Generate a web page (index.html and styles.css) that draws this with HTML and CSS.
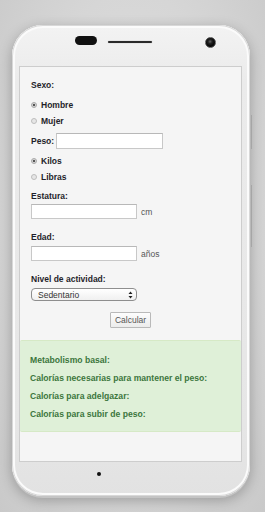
FILE: index.html
```html
<!DOCTYPE html>
<html lang="es">
<head>
    <meta charset="UTF-8">
    <meta name="viewport" content="width=device-width, initial-scale=1.0">
    <title>Calculadora de calorías</title>
    <link rel="stylesheet" href="styles.css">
</head>
<body>
    <div class="phone">
        <span class="side-button side-top"></span>
        <span class="side-button side-bottom"></span>

        <div class="bezel-top">
            <span class="earpiece"></span>
            <span class="speaker"></span>
            <span class="camera"></span>
        </div>

        <div class="screen">
            <form class="form">
                <div class="label">Sexo:</div>
                <label class="radio-row gap-10"><input type="radio" name="sexo" checked> Hombre</label>
                <label class="radio-row gap-6"><input type="radio" name="sexo"> Mujer</label>

                <div class="peso-row">
                    <span class="label">Peso:</span>
                    <input type="text" class="field field-peso">
                </div>

                <label class="radio-row gap-7"><input type="radio" name="unidad" checked> Kilos</label>
                <label class="radio-row gap-6"><input type="radio" name="unidad"> Libras</label>

                <div class="label gap-9">Estatura:</div>
                <div class="field-row gap-3">
                    <input type="text" class="field">
                    <span class="unit">cm</span>
                </div>

                <div class="label gap-13">Edad:</div>
                <div class="field-row gap-4">
                    <input type="text" class="field">
                    <span class="unit">años</span>
                </div>

                <div class="label gap-13">Nivel de actividad:</div>
                <div class="select gap-4">
                    <span>Sedentario</span>
                    <svg width="5" height="8" viewBox="0 0 5 8">
                        <path d="M0.5 3 L2.5 0.5 L4.5 3 Z M0.5 5 L2.5 7.5 L4.5 5 Z" fill="#222"/>
                    </svg>
                </div>

                <button type="button" class="calc">Calcular</button>
            </form>

            <div class="results">
                <p>Metabolismo basal:</p>
                <p>Calorías necesarias para mantener el peso:</p>
                <p>Calorías para adelgazar:</p>
                <p>Calorías para subir de peso:</p>
            </div>
        </div>

        <div class="bezel-bottom">
            <span class="home"></span>
        </div>
    </div>
</body>
</html>
```

FILE: styles.css
```css
body {
    margin: 0;
    width: 265px;
    height: 512px;
    overflow: hidden;
    font-family: "Liberation Sans", Arial, sans-serif;
    background: radial-gradient(ellipse at 50% 45%, #e2e2e2 0%, #d6d6d6 60%, #c9c9c9 100%);
}
.phone {
    position: relative;
    margin: 25px 0 0 12px;
    width: 238px;
    height: 471px;
    box-sizing: border-box;
    display: flex;
    flex-direction: column;
    border-radius: 31px;
    background: linear-gradient(#f3f3f3, #ebebeb 12%, #e6e6e6 85%, #e2e2e2);
    box-shadow: inset 0 0 0 1px #d8d8d8, inset 0 0 0 3px #fbfbfb, 0 2px 0 #c4c4c4, 0 4px 14px rgba(0, 0, 0, 0.28);
}
.side-button {
    position: absolute;
    right: -2px;
    width: 1px;
    background: #a6a6a6;
}
.side-top {
    top: 90px;
    height: 34px;
}
.side-bottom {
    top: 160px;
    height: 62px;
}
.bezel-top {
    height: 41px;
    display: flex;
    align-items: flex-start;
    flex-shrink: 0;
}
.earpiece {
    margin: 11px 0 0 63px;
    width: 22px;
    height: 9px;
    border-radius: 5px;
    background: #111;
}
.speaker {
    margin: 16px 0 0 11px;
    width: 44px;
    height: 2px;
    border-radius: 1px;
    background: #2a2a2a;
    box-shadow: 0 0 1px #888;
}
.camera {
    margin: 12px 0 0 53px;
    width: 9px;
    height: 9px;
    border-radius: 50%;
    background: radial-gradient(circle at 45% 40%, #666 0, #222 2px, #0a0a0a 4px);
    border: 1px solid #555;
}
.screen {
    margin: 0 8px 0 7px;
    height: 396px;
    box-sizing: border-box;
    flex-shrink: 0;
    background: #f5f5f5;
    border: 1px solid #cdcdcd;
}
.form {
    display: flex;
    flex-direction: column;
    align-items: flex-start;
    padding: 13px 0 0 11px;
    font-size: 8.5px;
    line-height: 10px;
    color: #1f1f2a;
}
.label {
    font-weight: bold;
}
.radio-row {
    display: flex;
    align-items: center;
    font-weight: bold;
    height: 10px;
}
.radio-row input {
    appearance: none;
    margin: 0 4px 0 0;
    width: 6px;
    height: 6px;
    border-radius: 50%;
    border: 1px solid #bdbdbd;
    background: #e6e6e6;
    box-sizing: border-box;
}
.radio-row input:checked {
    background: radial-gradient(circle, #555 0, #555 1px, #d8d8d8 1.6px);
    border-color: #a8a8a8;
}
.gap-3 { margin-top: 3px; }
.gap-4 { margin-top: 4px; }
.gap-6 { margin-top: 6px; }
.gap-7 { margin-top: 7px; }
.gap-9 { margin-top: 9px; }
.gap-10 { margin-top: 10px; }
.gap-13 { margin-top: 13px; }
.peso-row {
    margin-top: 7px;
    display: flex;
    align-items: center;
    gap: 2px;
}
.field {
    appearance: none;
    margin: 0;
    padding: 0;
    width: 106px;
    height: 15px;
    box-sizing: border-box;
    border: 1px solid #c8c8c8;
    border-top-color: #b8b8b8;
    background: #fff;
}
.field-peso {
    width: 107px;
    height: 16px;
}
.field-row {
    display: flex;
    align-items: center;
    gap: 4px;
}
.unit {
    color: #555;
}
.select {
    width: 106px;
    height: 13px;
    box-sizing: border-box;
    display: flex;
    align-items: center;
    justify-content: space-between;
    padding: 0 3px 0 6px;
    border: 1px solid #8e8e8e;
    border-radius: 4px;
    background: linear-gradient(#ffffff, #f0f0f0);
    color: #333;
}
.calc {
    margin: 11px 0 0 79px;
    width: 41px;
    height: 16px;
    padding: 0;
    font-family: inherit;
    font-size: 8.5px;
    color: #555;
    border: 1px solid #b9b9b9;
    background: linear-gradient(#fdfdfd, #ececec);
    border-radius: 1px;
}
.results {
    margin-top: 12px;
    padding: 14px 10px;
    height: 92px;
    box-sizing: border-box;
    background: #dff0d8;
    border-top: 1px solid #d6e9c6;
    border-bottom: 1px solid #d6e9c6;
    border-radius: 2px;
    display: flex;
    flex-direction: column;
    gap: 8px;
}
.results p {
    margin: 0;
    font-size: 8.6px;
    line-height: 10px;
    font-weight: bold;
    color: #3c763d;
}
.bezel-bottom {
    flex: 1;
    display: flex;
    align-items: flex-start;
}
.home {
    margin: 10px 0 0 85px;
    width: 4px;
    height: 4px;
    border-radius: 50%;
    background: #111;
}
```
